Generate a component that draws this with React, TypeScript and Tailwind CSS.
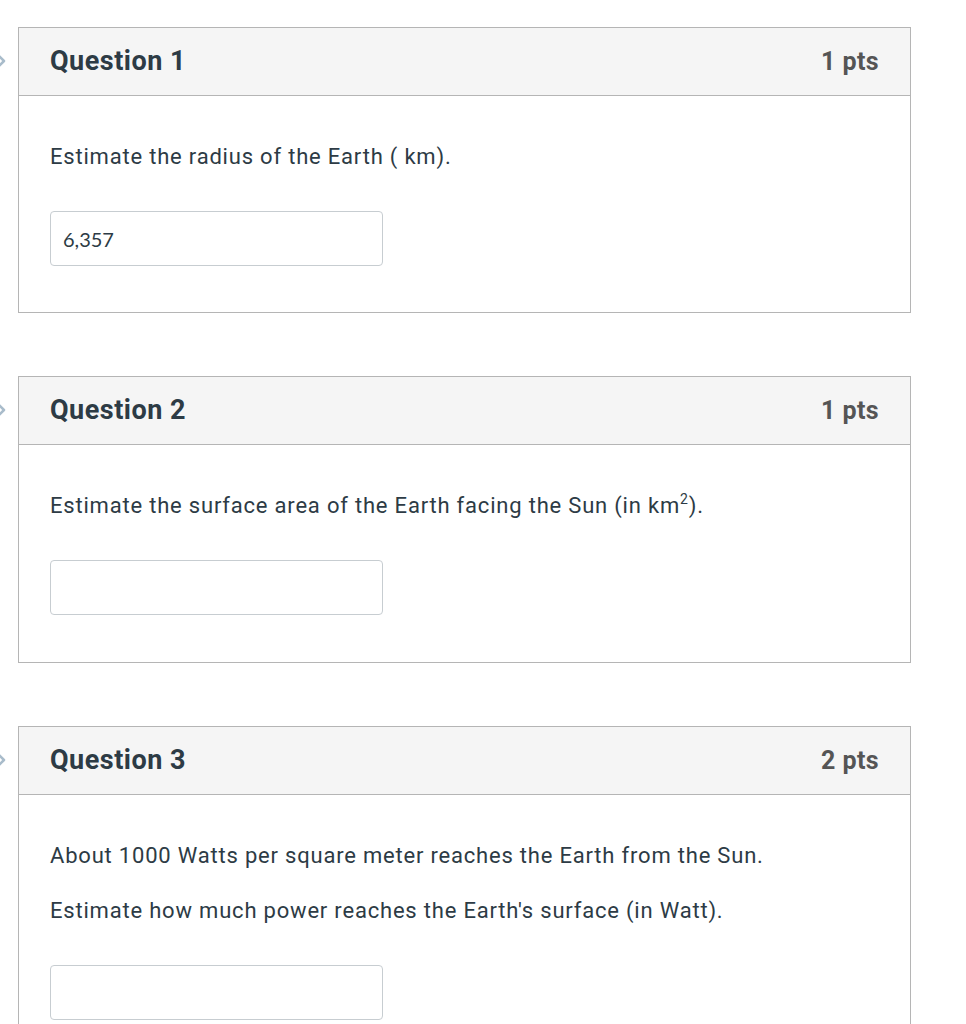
import React from "react";

type Q = { n: number; pts: string; lines: React.ReactNode[]; value: string };

const questions: Q[] = [
  { n: 1, pts: "1 pts", lines: ["Estimate the radius of the Earth ( km)."], value: "6,357" },
  {
    n: 2,
    pts: "1 pts",
    lines: [
      <>
        Estimate the surface area of the Earth facing the Sun (in km
        <sup className="text-[14px] relative -top-[9px]">2</sup>).
      </>,
    ],
    value: "",
  },
  {
    n: 3,
    pts: "2 pts",
    lines: [
      "About 1000 Watts per square meter reaches the Earth from the Sun.",
      "Estimate how much power reaches the Earth's surface (in Watt).",
    ],
    value: "",
  },
];

function Chevron() {
  return (
    <svg width="14" height="20" viewBox="0 0 14 20" className="-ml-[8px] shrink-0">
      <path d="M5 3 L12 10 L5 17" fill="none" stroke="#a9bccb" strokeWidth="2.5" strokeLinecap="round" strokeLinejoin="round" />
    </svg>
  );
}

export default function App() {
  return (
    <div
      className="min-h-screen bg-white pt-[27px] flex flex-col gap-[63px] overflow-hidden"
      style={{ fontFamily: "Roboto, 'Liberation Sans', sans-serif" }}
    >
      {questions.map((q) => (
        <div key={q.n} className="flex">
          <div className="w-[18px] shrink-0 h-[68px] flex items-center">
            <Chevron />
          </div>
          <div className="w-[893px] border border-[#b5b5b5] shrink-0">
            <div className="h-[68px] bg-[#f5f5f5] border-b border-[#b5b5b5] flex items-center justify-between pl-[31px] pr-[31px]">
              <span className="text-[27px] font-bold text-[#2d3b45] leading-none tracking-[0.5px]">Question {q.n}</span>
              <span className="text-[25px] font-bold text-[#555555] leading-none tracking-[0.4px]">{q.pts}</span>
            </div>
            <div className={`px-[31px] pt-[46px] ${q.n === 2 ? "pb-[47px]" : "pb-[46px]"}`}>
              {q.lines.map((l, i) => (
                <p
                  key={i}
                  className={`text-[22px] leading-[30px] text-[#2d3b45] tracking-[0.8px] ${i === q.lines.length - 1 ? "mb-[39px]" : "mb-[25px]"}`}
                >
                  {l}
                </p>
              ))}
              <div
                className="w-[333px] h-[55px] border border-[#c7cdd1] rounded-[4px] flex items-center px-[12px] text-[20px] text-[#2d3b45]"
                style={{ fontFamily: "Lato, 'Liberation Sans', sans-serif" }}
              >
                {q.value}
              </div>
            </div>
          </div>
        </div>
      ))}
    </div>
  );
}
